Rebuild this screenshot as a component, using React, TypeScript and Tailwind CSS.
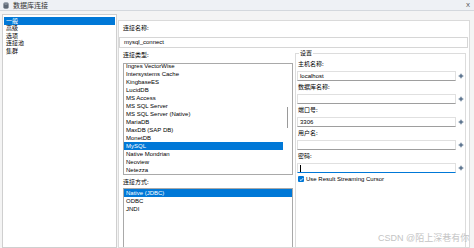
import React from 'react';

const dbTypes = [
  'Ingres VectorWise',
  'Intersystems Cache',
  'KingbaseES',
  'LucidDB',
  'MS Access',
  'MS SQL Server',
  'MS SQL Server (Native)',
  'MariaDB',
  'MaxDB (SAP DB)',
  'MonetDB',
  'MySQL',
  'Native Mondrian',
  'Neoview',
  'Netezza',
];

const accessTypes = ['Native (JDBC)', 'ODBC', 'JNDI'];

const sections = ['一般', '高级', '选项', '连接池', '集群'];

const fields = [
  { label: '主机名称:', value: 'localhost' },
  { label: '数据库名称:', value: '' },
  { label: '端口号:', value: '3306' },
  { label: '用户名:', value: '' },
  { label: '密码:', value: '', focused: true },
];

function VarIcon() {
  return (
    <svg width="6" height="6" viewBox="0 0 6 6" className="shrink-0">
      <path d="M3 0.2 L3.9 1.5 L2.1 1.5 Z M3 5.8 L2.1 4.5 L3.9 4.5 Z M0.2 3 L1.5 2.1 L1.5 3.9 Z M5.8 3 L4.5 3.9 L4.5 2.1 Z" fill="#6a8099" />
      <circle cx="3" cy="3" r="1.7" fill="#5f7690" />
    </svg>
  );
}

export default function App() {
  return (
    <div className="w-[474px] h-[248px] overflow-hidden bg-[#f4f4f4] flex flex-col relative font-['Noto_Sans_CJK_SC',sans-serif] text-black">
      {/* 标题栏 */}
      <div className="h-[11px] shrink-0 flex items-center bg-[#eef1f5] border-b border-[#d4d8dd] pl-[3px] pr-[4px]">
        <svg width="6" height="7" viewBox="0 0 6 7" className="shrink-0">
          <ellipse cx="3" cy="1.3" rx="2.6" ry="1.1" fill="#7d8794" />
          <path d="M0.4 1.3 V5.7 A2.6 1.1 0 0 0 5.6 5.7 V1.3 A2.6 1.1 0 0 1 0.4 1.3 Z" fill="#5e6875" />
        </svg>
        <span className="ml-[4px] text-[7px] leading-none text-[#333]">数据库连接</span>
        <span className="ml-auto text-[6px] leading-none text-[#444] font-['Liberation_Sans',sans-serif]">X</span>
      </div>

      <div className="flex-1 flex min-h-0 pt-[3px]">
        {/* 左侧导航 */}
        <div className="w-[115px] ml-[2px] shrink-0 bg-white border border-[#cfcfcf] pt-[2px] px-[1px]">
          {sections.map((s, i) => (
            <div
              key={s}
              className={`h-[7.5px] flex items-center pl-[2px] text-[6px] leading-none ${i === 0 ? 'bg-[#0078d7] text-white' : ''}`}
            >
              {s}
            </div>
          ))}
        </div>

        {/* 右侧面板 */}
        <div className="ml-[1px] mt-[6px] w-[352px] bg-white border border-[#dadada] flex flex-col min-h-0">
          <div className="pl-[4px] pt-[3px] h-[8px] box-content text-[6px] leading-[8px]">连接名称:</div>
          <div className="mt-[5px] mr-[1px] h-[11px] border border-[#d6d6d6] flex items-center pl-[4px] text-[6px] font-['Liberation_Sans',sans-serif]">
            mysql_connect
          </div>

          <div className="flex-1 flex min-h-0 pl-[4px] pr-[2px] gap-[2px]">
            {/* 左列 */}
            <div className="w-[170px] flex flex-col min-h-0">
              <div className="mt-[3px] h-[8px] text-[6px] leading-[8px]">连接类型:</div>
              <div className="mt-[4px] h-[112px] border border-[#a9a9a9] flex overflow-hidden font-['Liberation_Sans',sans-serif]">
                <div className="flex-1 -mt-[2px]">
                  {dbTypes.map((t) => (
                    <div
                      key={t}
                      className={`h-[8px] flex items-center pl-[2px] text-[6px] leading-none ${t === 'MySQL' ? 'bg-[#0078d7] text-white' : ''}`}
                    >
                      {t}
                    </div>
                  ))}
                </div>
                <div className="w-[9px] shrink-0 flex justify-center">
                  <div className="w-[1.5px] mt-[43px] h-[21px] bg-[#9a9a9a]" />
                </div>
              </div>
              <div className="mt-[3px] h-[8px] text-[6px] leading-[8px]">连接方式:</div>
              <div className="mt-[2px] flex-1 border border-[#a9a9a9] border-b-0 font-['Liberation_Sans',sans-serif]">
                {accessTypes.map((t, i) => (
                  <div
                    key={t}
                    className={`h-[8px] flex items-center pl-[2px] text-[6px] leading-none ${i === 0 ? 'bg-[#0078d7] text-white' : ''}`}
                  >
                    {t}
                  </div>
                ))}
              </div>
            </div>

            {/* 右列：设置 */}
            <fieldset className="w-[171px] mt-[1px] border border-[#dcdcdc] border-b-0 px-[1px] pb-0 min-w-0">
              <legend className="ml-[2px] px-[1px] text-[6px] leading-[8px]">设置</legend>
              <div className="mt-[3px] flex flex-col">
                {fields.map((f, i) => (
                  <div key={f.label} className={i === 0 ? '' : 'mt-[2px]'}>
                    <div className="h-[8px] text-[6px] leading-[8px] pl-[1px]">{f.label}</div>
                    <div className="mt-[3px] flex items-center gap-[2px]">
                      <div
                        className={`w-[161px] h-[10px] border border-[#e0e0e0] flex items-center pl-[2px] text-[6px] font-['Liberation_Sans',sans-serif] ${f.focused ? 'border-b-[#0078d7]' : 'border-b-[#9e9e9e]'}`}
                      >
                        {f.value}
                        {f.focused && <div className="w-px h-[7px] bg-black" />}
                      </div>
                      <VarIcon />
                    </div>
                  </div>
                ))}
                <div className="mt-[3px] flex items-center pl-[1px]">
                  <div className="w-[6px] h-[6px] bg-[#0078d7] rounded-[1px] flex items-center justify-center">
                    <svg width="5" height="5" viewBox="0 0 5 5">
                      <path d="M0.9 2.6 L2 3.6 L4.1 1.2" stroke="white" strokeWidth="0.9" fill="none" />
                    </svg>
                  </div>
                  <span className="ml-[2px] text-[6px] leading-none font-['Liberation_Sans',sans-serif]">Use Result Streaming Cursor</span>
                </div>
              </div>
            </fieldset>
          </div>
        </div>
      </div>

      {/* 水印 */}
      <div className="absolute left-[378px] top-[234px] text-[9px] leading-none text-[#c4c4c4] font-['Liberation_Sans','Noto_Sans_CJK_SC',sans-serif]">
        CSDN @陌上深巷有你
      </div>
    </div>
  );
}
